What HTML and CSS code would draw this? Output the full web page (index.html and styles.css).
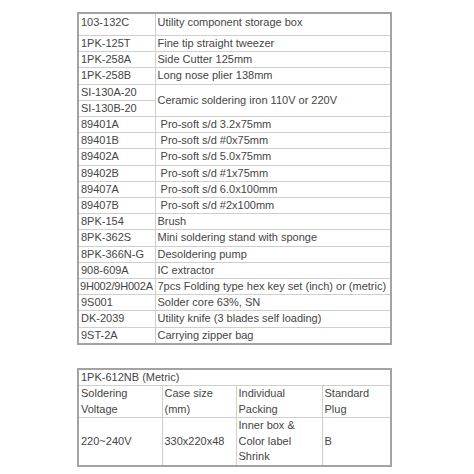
FILE: index.html
```html
<!DOCTYPE html>
<html>
<head>
<meta charset="utf-8">
<link rel="stylesheet" href="styles.css">
</head>
<body>
<div class="page">
  <table class="parts">
    <colgroup><col class="c-code"><col class="c-desc"></colgroup>
    <tr class="first"><td>103-132C</td><td>Utility component storage box</td></tr>
    <tr><td>1PK-125T</td><td>Fine tip straight tweezer</td></tr>
    <tr><td>1PK-258A</td><td>Side Cutter 125mm</td></tr>
    <tr><td>1PK-258B</td><td>Long nose plier 138mm</td></tr>
    <tr><td>SI-130A-20</td><td rowspan="2" class="mid">Ceramic soldering iron 110V or 220V</td></tr>
    <tr><td>SI-130B-20</td></tr>
    <tr><td>89401A</td><td>&nbsp;Pro-soft s/d 3.2x75mm</td></tr>
    <tr><td>89401B</td><td>&nbsp;Pro-soft s/d #0x75mm</td></tr>
    <tr><td>89402A</td><td>&nbsp;Pro-soft s/d 5.0x75mm</td></tr>
    <tr><td>89402B</td><td>&nbsp;Pro-soft s/d #1x75mm</td></tr>
    <tr><td>89407A</td><td>&nbsp;Pro-soft s/d 6.0x100mm</td></tr>
    <tr><td>89407B</td><td>&nbsp;Pro-soft s/d #2x100mm</td></tr>
    <tr><td>8PK-154</td><td>Brush</td></tr>
    <tr><td>8PK-362S</td><td>Mini soldering stand with sponge</td></tr>
    <tr><td>8PK-366N-G</td><td>Desoldering pump</td></tr>
    <tr><td>908-609A</td><td>IC extractor</td></tr>
    <tr><td class="tight">9H002/9H002A</td><td>7pcs Folding type hex key set (inch) or (metric)</td></tr>
    <tr><td>9S001</td><td>Solder core 63%, SN</td></tr>
    <tr><td>DK-2039</td><td>Utility knife (3 blades self loading)</td></tr>
    <tr><td>9ST-2A</td><td>Carrying zipper bag</td></tr>
  </table>

  <table class="spec">
    <colgroup><col class="s1"><col class="s2"><col class="s3"><col class="s4"></colgroup>
    <tr><td colspan="4">1PK-612NB (Metric)</td></tr>
    <tr><td>Soldering<br>Voltage</td><td>Case size<br>(mm)</td><td>Individual<br>Packing</td><td>Standard<br>Plug</td></tr>
    <tr class="mids"><td>220~240V</td><td>330x220x48</td><td>Inner box &amp;<br>Color label<br>Shrink</td><td>B</td></tr>
  </table>
</div>
</body>
</html>
```

FILE: styles.css
```css
html, body {
  margin: 0;
  padding: 0;
  background: #ffffff;
}

.page {
  padding: 12px 0 0 77px;
  font-family: "Liberation Sans", Arial, Helvetica, sans-serif;
  font-size: 11px;
  color: #454545;
}

table {
  border-collapse: collapse;
  table-layout: fixed;
  border: 2px solid #a3a3a3;
}

td {
  border: 1px solid #cfcfcf;
  padding: 0 0 0 2px;
  line-height: 15.2px;
  white-space: nowrap;
  vertical-align: middle;
  overflow: hidden;
}

td.tight {
  padding-left: 1px;
  letter-spacing: -0.2px;
}

.parts {
  width: 313px;
}

.c-code { width: 77px; }
.c-desc { width: 236px; }

.parts .first td {
  vertical-align: top;
  line-height: 16px;
  height: 21px;
}

.spec {
  width: 313px;
  margin-top: 23px;
}

.spec td {
  line-height: 15.5px;
  vertical-align: top;
}

.spec .mids td {
  vertical-align: middle;
}

.s1 { width: 84px; }
.s2 { width: 74px; }
.s3 { width: 86px; }
.s4 { width: 69px; }
```
